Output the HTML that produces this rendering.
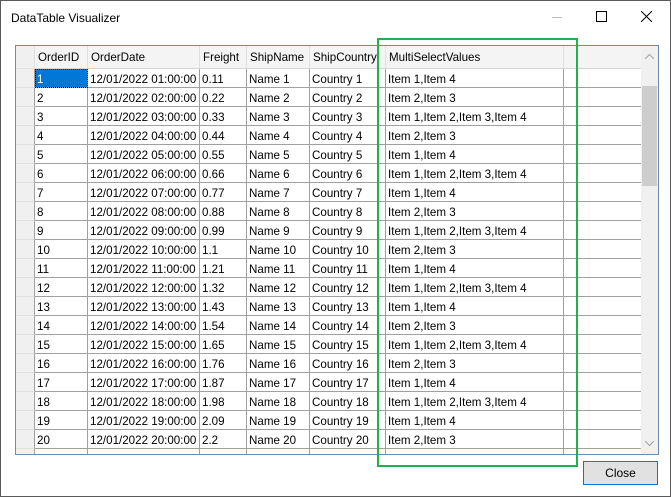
<!DOCTYPE html>
<html><head><style>
body{margin:0;width:671px;height:497px;overflow:hidden;background:#fff;font-family:"Liberation Sans",sans-serif;}
.win{position:absolute;left:0;top:0;width:669px;height:495px;border:1px solid #5a5a5a;background:#fff;}
.title{position:absolute;left:10px;top:10px;font-size:12px;color:#000;}
.grid{position:absolute;left:14px;top:44px;width:642px;height:408px;border:1px solid #6b8bb0;background:#fff;overflow:hidden;font-size:11.6px;}
.r{display:flex;height:19px;}
.r div{box-sizing:border-box;height:19px;line-height:19px;padding-top:1px;padding-left:2px;border-right:1px solid #a0a0a0;border-bottom:1px solid #a0a0a0;white-space:nowrap;overflow:hidden;flex:none;}
.h{height:23px!important;}
.h div{height:23px;line-height:23px;padding-top:0;padding-left:3px;background:#f4f4f5;border-right:1px solid #e0e0e0;border-bottom:1px solid #d5d5d5;}
.c0{width:19px;}.c1{width:53px;}.c2{width:112px;}.c3{width:47px;}.c4{width:63px;}.c5{width:76px;}.c6{width:178px;}.c7{width:77px;border-right:none!important;}
.r .c0{background:#f0f0f0;border-bottom-color:#e0e0e0;}
.r .sel{background:#0078d7;color:#fff;outline:1px dotted #000;outline-offset:-1px;}
.sb{position:absolute;left:625px;top:0;width:17px;height:408px;background:#f0f0f0;}
.thumb{position:absolute;left:1px;top:40px;width:15px;height:100px;background:#cdcdcd;}
.green{position:absolute;left:376px;top:37px;width:197px;height:425px;border:2px solid #22b14c;}
.btn{position:absolute;left:582px;top:460px;width:73px;height:22px;border:1px solid #0078d7;background:#e1e1e1;font-size:12px;text-align:center;line-height:22px;}
</style></head><body>
<div class="win">
<div class="title">DataTable Visualizer</div>
<div style="position:absolute;left:551px;top:16px;width:10px;height:1px;background:#bbb"></div>
<div style="position:absolute;left:595px;top:10px;width:9px;height:9px;border:1px solid #000"></div>
<svg style="position:absolute;left:640px;top:10px" width="11" height="11"><path d="M0 0L11 11M11 0L0 11" stroke="#000" stroke-width="1"/></svg>
<div class="grid">
<div class="r h"><div class="c0"></div><div class="c1">OrderID</div><div class="c2">OrderDate</div><div class="c3">Freight</div><div class="c4">ShipName</div><div class="c5">ShipCountry</div><div class="c6">MultiSelectValues</div><div class="c7"></div></div>
<div class="r"><div class="c0"></div><div class="c1 sel">1</div><div class="c2">12/01/2022 01:00:00</div><div class="c3">0.11</div><div class="c4">Name 1</div><div class="c5">Country 1</div><div class="c6">Item 1,Item 4</div><div class="c7"></div></div>
<div class="r"><div class="c0"></div><div class="c1">2</div><div class="c2">12/01/2022 02:00:00</div><div class="c3">0.22</div><div class="c4">Name 2</div><div class="c5">Country 2</div><div class="c6">Item 2,Item 3</div><div class="c7"></div></div>
<div class="r"><div class="c0"></div><div class="c1">3</div><div class="c2">12/01/2022 03:00:00</div><div class="c3">0.33</div><div class="c4">Name 3</div><div class="c5">Country 3</div><div class="c6">Item 1,Item 2,Item 3,Item 4</div><div class="c7"></div></div>
<div class="r"><div class="c0"></div><div class="c1">4</div><div class="c2">12/01/2022 04:00:00</div><div class="c3">0.44</div><div class="c4">Name 4</div><div class="c5">Country 4</div><div class="c6">Item 2,Item 3</div><div class="c7"></div></div>
<div class="r"><div class="c0"></div><div class="c1">5</div><div class="c2">12/01/2022 05:00:00</div><div class="c3">0.55</div><div class="c4">Name 5</div><div class="c5">Country 5</div><div class="c6">Item 1,Item 4</div><div class="c7"></div></div>
<div class="r"><div class="c0"></div><div class="c1">6</div><div class="c2">12/01/2022 06:00:00</div><div class="c3">0.66</div><div class="c4">Name 6</div><div class="c5">Country 6</div><div class="c6">Item 1,Item 2,Item 3,Item 4</div><div class="c7"></div></div>
<div class="r"><div class="c0"></div><div class="c1">7</div><div class="c2">12/01/2022 07:00:00</div><div class="c3">0.77</div><div class="c4">Name 7</div><div class="c5">Country 7</div><div class="c6">Item 1,Item 4</div><div class="c7"></div></div>
<div class="r"><div class="c0"></div><div class="c1">8</div><div class="c2">12/01/2022 08:00:00</div><div class="c3">0.88</div><div class="c4">Name 8</div><div class="c5">Country 8</div><div class="c6">Item 2,Item 3</div><div class="c7"></div></div>
<div class="r"><div class="c0"></div><div class="c1">9</div><div class="c2">12/01/2022 09:00:00</div><div class="c3">0.99</div><div class="c4">Name 9</div><div class="c5">Country 9</div><div class="c6">Item 1,Item 2,Item 3,Item 4</div><div class="c7"></div></div>
<div class="r"><div class="c0"></div><div class="c1">10</div><div class="c2">12/01/2022 10:00:00</div><div class="c3">1.1</div><div class="c4">Name 10</div><div class="c5">Country 10</div><div class="c6">Item 2,Item 3</div><div class="c7"></div></div>
<div class="r"><div class="c0"></div><div class="c1">11</div><div class="c2">12/01/2022 11:00:00</div><div class="c3">1.21</div><div class="c4">Name 11</div><div class="c5">Country 11</div><div class="c6">Item 1,Item 4</div><div class="c7"></div></div>
<div class="r"><div class="c0"></div><div class="c1">12</div><div class="c2">12/01/2022 12:00:00</div><div class="c3">1.32</div><div class="c4">Name 12</div><div class="c5">Country 12</div><div class="c6">Item 1,Item 2,Item 3,Item 4</div><div class="c7"></div></div>
<div class="r"><div class="c0"></div><div class="c1">13</div><div class="c2">12/01/2022 13:00:00</div><div class="c3">1.43</div><div class="c4">Name 13</div><div class="c5">Country 13</div><div class="c6">Item 1,Item 4</div><div class="c7"></div></div>
<div class="r"><div class="c0"></div><div class="c1">14</div><div class="c2">12/01/2022 14:00:00</div><div class="c3">1.54</div><div class="c4">Name 14</div><div class="c5">Country 14</div><div class="c6">Item 2,Item 3</div><div class="c7"></div></div>
<div class="r"><div class="c0"></div><div class="c1">15</div><div class="c2">12/01/2022 15:00:00</div><div class="c3">1.65</div><div class="c4">Name 15</div><div class="c5">Country 15</div><div class="c6">Item 1,Item 2,Item 3,Item 4</div><div class="c7"></div></div>
<div class="r"><div class="c0"></div><div class="c1">16</div><div class="c2">12/01/2022 16:00:00</div><div class="c3">1.76</div><div class="c4">Name 16</div><div class="c5">Country 16</div><div class="c6">Item 2,Item 3</div><div class="c7"></div></div>
<div class="r"><div class="c0"></div><div class="c1">17</div><div class="c2">12/01/2022 17:00:00</div><div class="c3">1.87</div><div class="c4">Name 17</div><div class="c5">Country 17</div><div class="c6">Item 1,Item 4</div><div class="c7"></div></div>
<div class="r"><div class="c0"></div><div class="c1">18</div><div class="c2">12/01/2022 18:00:00</div><div class="c3">1.98</div><div class="c4">Name 18</div><div class="c5">Country 18</div><div class="c6">Item 1,Item 2,Item 3,Item 4</div><div class="c7"></div></div>
<div class="r"><div class="c0"></div><div class="c1">19</div><div class="c2">12/01/2022 19:00:00</div><div class="c3">2.09</div><div class="c4">Name 19</div><div class="c5">Country 19</div><div class="c6">Item 1,Item 4</div><div class="c7"></div></div>
<div class="r"><div class="c0"></div><div class="c1">20</div><div class="c2">12/01/2022 20:00:00</div><div class="c3">2.2</div><div class="c4">Name 20</div><div class="c5">Country 20</div><div class="c6">Item 2,Item 3</div><div class="c7"></div></div>
<div class="r"><div class="c0"></div><div class="c1"></div><div class="c2"></div><div class="c3"></div><div class="c4"></div><div class="c5"></div><div class="c6"></div><div class="c7"></div></div>
<div class="sb"><svg style="position:absolute;left:4px;top:8px" width="9" height="5"><path d="M0 5L4.5 0.5L9 5" stroke="#a0a0a0" fill="none"/></svg><div class="thumb"></div><svg style="position:absolute;left:4px;top:395px" width="9" height="5"><path d="M0 0L4.5 4.5L9 0" stroke="#a0a0a0" fill="none"/></svg></div>
</div>
<div class="green"></div>
<div class="btn">Close</div>
</div>
</body></html>
